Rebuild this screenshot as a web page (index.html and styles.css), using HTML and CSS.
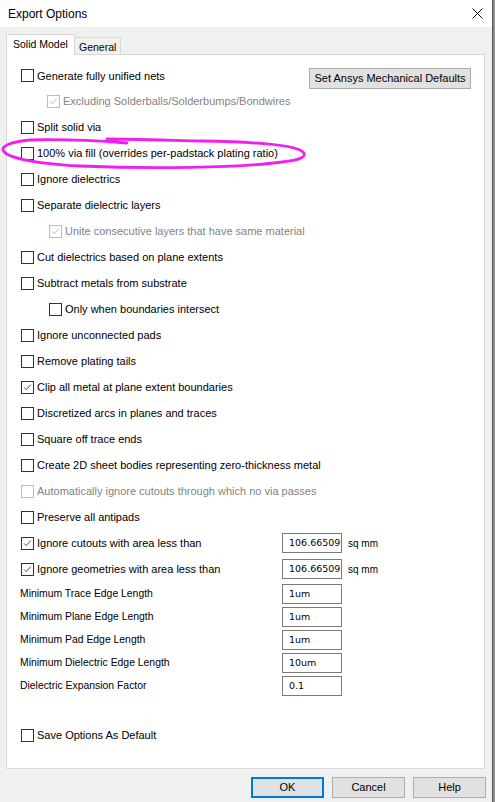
FILE: index.html
```html
<!DOCTYPE html>
<html lang="en">
<head>
    <meta charset="UTF-8">
    <title>Export Options</title>
    <link rel="stylesheet" href="styles.css">
</head>
<body>

    <div class="window">
        <div class="titlebar">
            <span class="title">Export Options</span>
            <svg class="close" width="11" height="11" viewBox="0 0 11 11">
                <path d="M0.5 0.5 L10.5 10.5 M10.5 0.5 L0.5 10.5" stroke="#000" stroke-width="1" fill="none"/>
            </svg>
        </div>

        <div class="tabs">
            <div class="tab active">Solid Model</div>
            <div class="tab">General</div>
        </div>

        <div class="panel">
            <div class="row first">
                <label class="check"><span class="box"></span>Generate fully unified nets</label>
                <div class="btn defaults">Set Ansys Mechanical Defaults</div>
            </div>
            <div class="row sub sub-a disabled">
                <label class="check"><span class="box on"><svg viewBox="0 0 13 13"><path d="M2.5 6.5 L5 9 L10.5 3"/></svg></span>Excluding Solderballs/Solderbumps/Bondwires</label>
            </div>
            <div class="row"><label class="check"><span class="box"></span>Split solid via</label></div>
            <div class="row"><label class="check"><span class="box"></span>100% via fill (overrides per-padstack plating ratio)</label></div>
            <div class="row"><label class="check"><span class="box"></span>Ignore dielectrics</label></div>
            <div class="row"><label class="check"><span class="box"></span>Separate dielectric layers</label></div>
            <div class="row sub disabled">
                <label class="check"><span class="box on"><svg viewBox="0 0 13 13"><path d="M2.5 6.5 L5 9 L10.5 3"/></svg></span>Unite consecutive layers that have same material</label>
            </div>
            <div class="row"><label class="check"><span class="box"></span>Cut dielectrics based on plane extents</label></div>
            <div class="row"><label class="check"><span class="box"></span>Subtract metals from substrate</label></div>
            <div class="row sub"><label class="check"><span class="box"></span>Only when boundaries intersect</label></div>
            <div class="row"><label class="check"><span class="box"></span>Ignore unconnected pads</label></div>
            <div class="row"><label class="check"><span class="box"></span>Remove plating tails</label></div>
            <div class="row">
                <label class="check"><span class="box on"><svg viewBox="0 0 13 13"><path d="M2.5 6.5 L5 9 L10.5 3"/></svg></span>Clip all metal at plane extent boundaries</label>
            </div>
            <div class="row"><label class="check"><span class="box"></span>Discretized arcs in planes and traces</label></div>
            <div class="row"><label class="check"><span class="box"></span>Square off trace ends</label></div>
            <div class="row"><label class="check"><span class="box"></span>Create 2D sheet bodies representing zero-thickness metal</label></div>
            <div class="row disabled"><label class="check"><span class="box"></span>Automatically ignore cutouts through which no via passes</label></div>
            <div class="row"><label class="check"><span class="box"></span>Preserve all antipads</label></div>

            <div class="field-row">
                <label class="check"><span class="box on"><svg viewBox="0 0 13 13"><path d="M2.5 6.5 L5 9 L10.5 3"/></svg></span>Ignore cutouts with area less than</label>
                <span class="field">106.66509</span>
                <span class="unit">sq mm</span>
            </div>
            <div class="field-row">
                <label class="check"><span class="box on"><svg viewBox="0 0 13 13"><path d="M2.5 6.5 L5 9 L10.5 3"/></svg></span>Ignore geometries with area less than</label>
                <span class="field">106.66509</span>
                <span class="unit">sq mm</span>
            </div>
            <div class="field-row short">
                <span class="label">Minimum Trace Edge Length</span>
                <span class="field">1um</span>
            </div>
            <div class="field-row short">
                <span class="label">Minimum Plane Edge Length</span>
                <span class="field">1um</span>
            </div>
            <div class="field-row short">
                <span class="label">Minimum Pad Edge Length</span>
                <span class="field">1um</span>
            </div>
            <div class="field-row short">
                <span class="label">Minimum Dielectric Edge Length</span>
                <span class="field">10um</span>
            </div>
            <div class="field-row short">
                <span class="label">Dielectric Expansion Factor</span>
                <span class="field">0.1</span>
            </div>

            <div class="row save"><label class="check"><span class="box"></span>Save Options As Default</label></div>
        </div>

        <div class="footer">
            <div class="btn ok">OK</div>
            <div class="btn">Cancel</div>
            <div class="btn">Help</div>
        </div>

        <!-- hand drawn highlight around the via fill option -->
        <svg class="scribble" width="495" height="802" viewBox="0 0 495 802">
            <path d="M127 143 C100 141 60 139 30 140 C10 142 2 146 3 150 C5 157 30 163 80 166 C150 169 240 168 282 162 C302 160 307 156 303 152 C297 146 262 142 202 141 C160 140 125 139 107 139"/>
        </svg>
    </div>

</body>
</html>
```

FILE: styles.css
```css
body {
    margin: 0;
    padding: 0;
    background-color: #8c8c8c;
    font-family: "Liberation Sans", Arial, sans-serif;
    font-size: 11px;
    color: #000;
}
.window {
    position: relative;
    width: 492px;
    height: 802px;
    background-color: #f0f0f0;
    border-right: 1px solid #555;
    display: flex;
    flex-direction: column;
}
.titlebar {
    height: 27px;
    flex-shrink: 0;
    background-color: #fff;
    display: flex;
    align-items: center;
    justify-content: space-between;
    padding-left: 8px;
}
.title {
    font-size: 12px;
}
.close {
    margin-right: 9px;
}
.tabs {
    display: flex;
    align-items: flex-end;
    height: 20px;
    margin: 7px 0 0 6px;
    position: relative;
    z-index: 1;
}
.tab {
    box-sizing: border-box;
    height: 17px;
    padding: 0 4px;
    border: 1px solid #d9d9d9;
    border-bottom: none;
    border-left: none;
    font-size: 10.5px;
    line-height: 18px;
    background-color: #f0f0f0;
}
.tab.active {
    height: 21px;
    margin-bottom: -1px;
    width: 69px;
    padding: 0 6px;
    border-left: 1px solid #d9d9d9;
    background-color: #fff;
    line-height: 18px;
}
.panel {
    box-sizing: border-box;
    height: 715px;
    margin: 0 7px 0 6px;
    padding: 7px 0 0 14px;
    background-color: #fff;
    border: 1px solid #d9d9d9;
}
.row {
    height: 26px;
    display: flex;
    align-items: center;
}
.row.sub {
    padding-left: 28px;
}
.row.sub-a {
    padding-left: 26px;
}
.row.first {
    justify-content: space-between;
    align-items: flex-start;
}
.row.first .check {
    margin-top: 7px;
}
.check {
    display: flex;
    align-items: center;
    white-space: nowrap;
}
.box {
    box-sizing: border-box;
    width: 13px;
    height: 13px;
    margin-right: 3px;
    border: 1px solid #333;
    background-color: #fff;
    display: inline-block;
}
.box svg {
    display: block;
    width: 11px;
    height: 11px;
    margin: 0;
}
.box svg path {
    fill: none;
    stroke: #333;
    stroke-width: 1;
}
.disabled {
    color: #838383;
}
.disabled .box {
    border-color: #bcbcbc;
}
.disabled .box svg path {
    stroke: #a8a8a8;
}
.btn {
    box-sizing: border-box;
    height: 21px;
    border: 1px solid #adadad;
    background-color: #e1e1e1;
    text-align: center;
    line-height: 19px;
    font-size: 11px;
    cursor: pointer;
}
.defaults {
    width: 162px;
    margin: 6px 13px 0 0;
}
.field-row {
    height: 26px;
    display: grid;
    grid-template-columns: 261px 60px auto;
    align-items: center;
}
.field-row.short {
    height: 23px;
}
.label {
    margin-left: -1px;
    font-size: 10.4px;
}
.field {
    box-sizing: border-box;
    width: 60px;
    height: 20px;
    border: 1px solid #7a7a7a;
    padding-left: 6px;
    font-family: "DejaVu Sans", Verdana, sans-serif;
    font-size: 9.5px;
    line-height: 18px;
    background-color: #fff;
}
.unit {
    padding-left: 6px;
    font-size: 10px;
}
.row.save {
    margin-top: 25px;
}
.footer {
    display: flex;
    justify-content: flex-end;
    gap: 8px;
    margin-top: 8px;
    padding-right: 6px;
}
.footer .btn {
    width: 73px;
}
.footer .btn.ok {
    border: 2px solid #0078d7;
    line-height: 17px;
}
.scribble {
    position: absolute;
    left: 0;
    top: 0;
    pointer-events: none;
}
.scribble path {
    fill: none;
    stroke: #f01ef0;
    stroke-width: 2.8;
    stroke-linecap: round;
}
```
